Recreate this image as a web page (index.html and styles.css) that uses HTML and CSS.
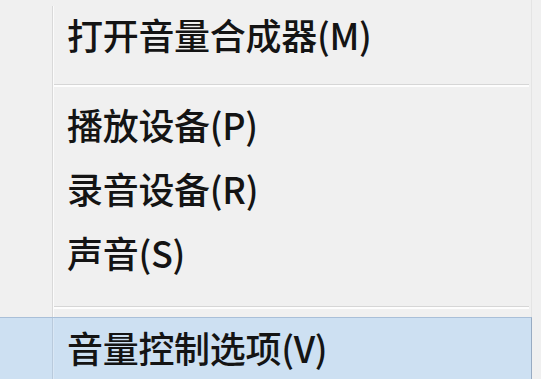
FILE: index.html
```html
<!DOCTYPE html>
<html lang="zh-CN">
<head>
<meta charset="utf-8">
<title>音量菜单</title>
<link rel="stylesheet" href="styles.css">
</head>
<body>
<div class="menu">
  <div class="item first"><div class="gutter"></div><div class="label">打开音量合成器(M)</div></div>
  <div class="sep sep1"><div class="gutter"></div><div class="line"></div></div>
  <div class="item"><div class="gutter"></div><div class="label">播放设备(P)</div></div>
  <div class="item"><div class="gutter"></div><div class="label">录音设备(R)</div></div>
  <div class="item"><div class="gutter"></div><div class="label">声音(S)</div></div>
  <div class="sep sep2"><div class="gutter"></div><div class="line"></div></div>
  <div class="item active"><div class="gutter"></div><div class="label">音量控制选项(V)</div></div>
</div>
</body>
</html>
```

FILE: styles.css
```css
html, body {
  margin: 0;
  padding: 0;
  background: #f0f0f0;
  overflow: hidden;
}
body {
  width: 541px;
  height: 379px;
}
.menu {
  width: 531px;
  padding-top: 6px;
  border-right: 1px solid #e4e4e4;
  display: flex;
  flex-direction: column;
  font-family: "Noto Sans CJK SC", "Noto Sans", sans-serif;
  font-size: 36px;
  font-weight: 500;
  color: #141414;
}
.item {
  display: flex;
  height: 64px;
  box-sizing: border-box;
}
.gutter {
  width: 52px;
  flex: none;
  border-right: 1px solid #d9d9d9;
}
.label {
  flex: 1;
  display: flex;
  align-items: center;
  padding-left: 13px;
  border-left: 1px solid #fbfbfb;
  line-height: 1;
  padding-bottom: 9px;
  letter-spacing: -0.3px;
}
.sep {
  display: flex;
}
.sep1 {
  height: 26px;
}
.sep2 {
  height: 29px;
}
.sep .line {
  flex: 1;
  border-left: 1px solid #fbfbfb;
  position: relative;
}
.sep .line::after {
  content: "";
  position: absolute;
  left: 0;
  right: 2px;
  height: 1px;
  background: #d6d6d6;
  border-bottom: 2px solid #fdfdfd;
}
.sep1 .line::after {
  top: 14px;
}
.sep2 .line::after {
  top: 18px;
}
.item.active {
  background: #cde0f2;
  border-top: 1px solid #a9bfd8;
  border-right: 1px solid #98abc2;
  margin-right: -1px;
}
.item.active .label {
  padding-bottom: 6px;
  border-left-color: #d9e7f5;
}
.item.active .gutter {
  border-right-color: #b9cadc;
}
```
